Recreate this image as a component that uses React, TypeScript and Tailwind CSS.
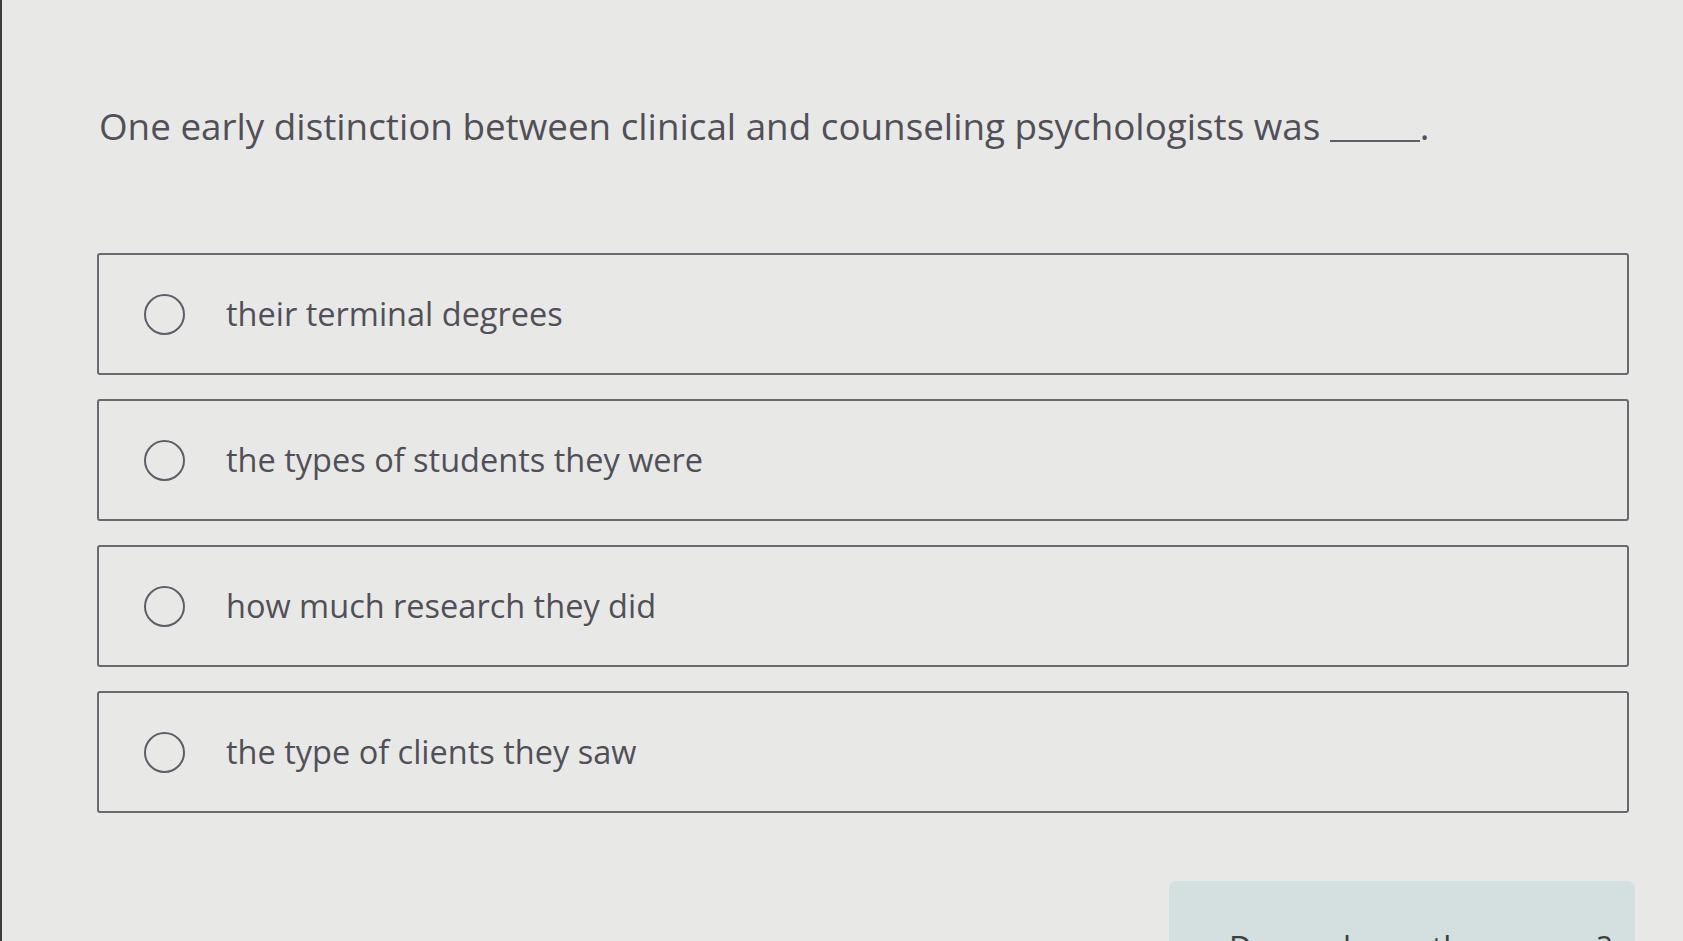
import React from "react";

const options = [
  "their terminal degrees",
  "the types of students they were",
  "how much research they did",
  "the type of clients they saw",
];

function Radio() {
  return (
    <span className="block w-[41px] h-[41px] shrink-0 rounded-full border-2 border-[#5f5d66]" />
  );
}

export default function App() {
  return (
    <div
      className="relative w-[1683px] h-[941px] overflow-hidden bg-[#e8e9e7] text-[#524f59] border-l-2 border-[#3c3b40]"
      style={{ fontFamily: '"Open Sans", "Noto Sans", sans-serif' }}
    >
      <div className="pl-[97px] pt-[101px]">
        <p className="text-[36.8px] leading-[50px]">
          One early distinction between clinical and counseling psychologists was{" "}
          <span className="inline-block w-[90px] border-b-2 border-[#5f5d66] align-baseline translate-y-[2px]" />
          .
        </p>
      </div>

      <div className="mt-[102px] ml-[95px] w-[1532px] flex flex-col gap-[24px]">
        {options.map((o) => (
          <label
            key={o}
            className="h-[122px] flex items-center rounded-[3px] border-2 border-[#6a6970] pl-[45px] cursor-pointer"
          >
            <Radio />
            <span className="ml-[41px] text-[32.5px] leading-[42px]">{o}</span>
          </label>
        ))}
      </div>

      <div className="absolute left-[1167px] top-[881px] w-[466px] h-[90px] rounded-[8px] bg-[#d4dfdf] pl-[60px] pt-[46px]">
        <span className="text-[32px] leading-[42px] text-[#3f3e44]">Do you know the answer?</span>
      </div>
    </div>
  );
}
